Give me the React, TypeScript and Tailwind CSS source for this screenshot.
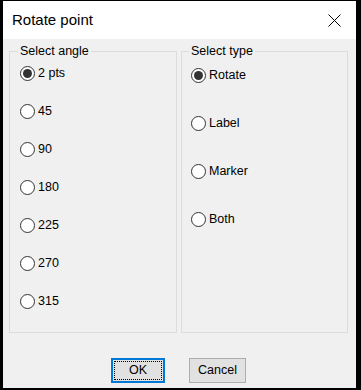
import React from 'react';

const angles = ['2 pts', '45', '90', '180', '225', '270', '315'];
const types = ['Rotate', 'Label', 'Marker', 'Both'];

const Radio: React.FC<{ label: string; checked?: boolean }> = ({ label, checked }) => (
  <div className="flex items-center h-[16px] gap-[3px]">
    <span className="w-[15px] h-[15px] rounded-full border border-[#333333] bg-white flex items-center justify-center">
      {checked && <span className="w-[9px] h-[9px] rounded-full bg-[#333333]"></span>}
    </span>
    <span className="text-black leading-none">{label}</span>
  </div>
);

export default function App() {
  return (
    <div className="w-[361px] h-[390px] bg-black pl-[3px] pt-[1px] pr-[5px] pb-[2px]" style={{ fontFamily: '"Liberation Sans", Arial, sans-serif' }}>
      <div className="w-full h-full flex flex-col bg-[#f0f0f0]">
        <div className="h-[38px] bg-white flex items-center justify-between pl-[9px] pr-[15px]">
          <span className="text-[15px] text-black">Rotate point</span>
          <svg width="13" height="13" viewBox="0 0 13 13" className="text-black">
            <path d="M0.5 0.5 L12.5 12.5 M12.5 0.5 L0.5 12.5" stroke="currentColor" strokeWidth="1" fill="none" />
          </svg>
        </div>
        <div className="flex-1 flex flex-col pl-[6px] pr-[8px] pt-[5px] pb-[5px] text-[12.5px]">
          <div className="flex gap-[4px] h-[289px]">
            <fieldset className="w-[168px] border border-[#dcdcdc] pl-[10px] pt-[6px]">
              <legend className="ml-[-2px] px-[2px] leading-[15px] text-black">Select angle</legend>
              <div className="flex flex-col gap-[22px]">
                {angles.map((a, i) => <Radio key={a} label={a} checked={i === 0} />)}
              </div>
            </fieldset>
            <fieldset className="flex-1 border border-[#dcdcdc] pl-[9px] pt-[8px]">
              <legend className="ml-[-2px] px-[2px] leading-[15px] text-black">Select type</legend>
              <div className="flex flex-col gap-[32px]">
                {types.map((t, i) => <Radio key={t} label={t} checked={i === 0} />)}
              </div>
            </fieldset>
          </div>
          <div className="flex-1 flex items-end justify-center gap-[24px]">
            <button className="w-[54px] h-[25px] border-2 border-[#0078d7] bg-[#e1e1e1] p-[1px]">
              <span className="w-full h-full flex items-center justify-center border border-dotted border-black text-black">OK</span>
            </button>
            <button className="w-[57px] h-[25px] border border-[#adadad] bg-[#e1e1e1] flex items-center justify-center text-black">Cancel</button>
          </div>
        </div>
      </div>
    </div>
  );
}
